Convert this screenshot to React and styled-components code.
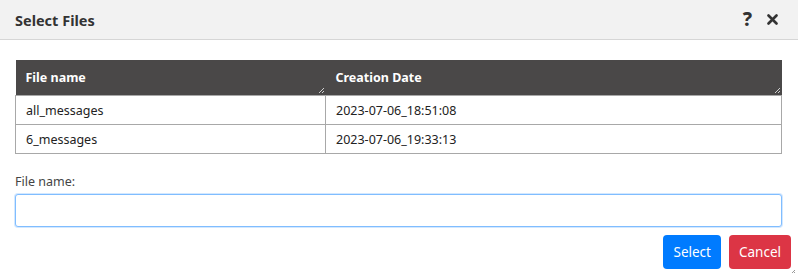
import React from 'react';
import styled, { createGlobalStyle } from 'styled-components';

const GlobalStyle = createGlobalStyle`
  html, body {
    margin: 0;
    padding: 0;
    background: #ffffff;
  }
  body {
    font-family: 'Noto Sans', 'Open Sans', sans-serif;
    color: #333;
  }
`;

const Dialog = styled.div`
  width: 798px;
  height: 276px;
  display: flex;
  flex-direction: column;
  background: #fff;
  position: relative;
`;

const Header = styled.div`
  height: 39px;
  flex-shrink: 0;
  display: flex;
  align-items: center;
  justify-content: space-between;
  padding: 0 20px 0 15px;
  background: #f2f2f2;
  border-bottom: 1px solid #d6d6d6;
`;

const Title = styled.h2`
  margin: 0;
  font-size: 14.5px;
  font-weight: 700;
  color: #333;
`;

const HeaderTools = styled.div`
  display: flex;
  align-items: center;
  gap: 15px;
`;

const ToolButton = styled.button`
  border: 0;
  background: none;
  padding: 0;
  cursor: pointer;
  color: #333;
  display: flex;
  align-items: center;
  font-family: inherit;
  font-weight: 800;
  font-size: ${p => p.$size || 16}px;
  line-height: 1;
`;

const Body = styled.div`
  padding: 20px 15px 0 15px;
  display: flex;
  flex-direction: column;
`;

const Table = styled.table`
  width: 767px;
  border-collapse: collapse;
  font-size: 12.5px;
`;

const HeadCell = styled.th`
  position: relative;
  height: 35px;
  padding: 0 10px;
  text-align: left;
  background: #4a4848;
  color: #fff;
  font-weight: 700;
  width: ${p => p.$width || 'auto'};
`;

const Grip = styled.svg`
  position: absolute;
  right: 1px;
  bottom: 1px;
`;

const Cell = styled.td`
  height: 28px;
  padding: 0 10px;
  border: 1px solid #a8a8a8;
  color: #222;
`;

const Label = styled.label`
  margin-top: 20px;
  font-size: 12.5px;
  color: #444;
  line-height: 16px;
`;

const Input = styled.input`
  margin-top: 4px;
  height: 33px;
  box-sizing: border-box;
  width: 767px;
  border: 1px solid #80bdff;
  border-radius: 3px;
  box-shadow: 0 0 0 1px rgba(128, 189, 255, 0.35);
  outline: none;
  padding: 0 8px;
  font-family: inherit;
  font-size: 13px;
`;

const Actions = styled.div`
  display: flex;
  justify-content: flex-end;
  gap: 8px;
  margin-top: 8px;
  padding-right: 7px;
  margin-right: -15px;
`;

const Button = styled.button`
  height: 34px;
  padding: 0 10px;
  border: 0;
  border-radius: 4px;
  color: #fff;
  font-family: inherit;
  font-size: 13.5px;
  cursor: pointer;
  background: ${p => (p.$variant === 'danger' ? '#dc3545' : '#007bff')};
`;

const Corner = styled.svg`
  position: absolute;
  right: 2px;
  bottom: 2px;
`;

const files = [
  { name: 'all_messages', date: '2023-07-06_18:51:08' },
  { name: '6_messages', date: '2023-07-06_19:33:13' },
];

const ResizeGrip = () => (
  <Grip width="7" height="7" viewBox="0 0 7 7">
    <path d="M6 1L1 6M6 4L4 6" stroke="#d0d0d0" strokeWidth="1" />
  </Grip>
);

export default function App() {
  return (
    <>
      <GlobalStyle />
      <Dialog>
        <Header>
          <Title>Select Files</Title>
          <HeaderTools>
            <ToolButton $size={19} aria-label="help">?</ToolButton>
            <ToolButton aria-label="close">
              <svg width="11" height="11" viewBox="0 0 11 11">
                <path d="M1.5 1.5L9.5 9.5M9.5 1.5L1.5 9.5" stroke="#333" strokeWidth="2.6" strokeLinecap="round" />
              </svg>
            </ToolButton>
          </HeaderTools>
        </Header>
        <Body>
          <Table>
            <thead>
              <tr>
                <HeadCell $width="290px">
                  File name
                  <ResizeGrip />
                </HeadCell>
                <HeadCell>
                  Creation Date
                  <ResizeGrip />
                </HeadCell>
              </tr>
            </thead>
            <tbody>
              {files.map(f => (
                <tr key={f.name}>
                  <Cell>{f.name}</Cell>
                  <Cell>{f.date}</Cell>
                </tr>
              ))}
            </tbody>
          </Table>
          <Label htmlFor="fname">File name:</Label>
          <Input id="fname" type="text" />
          <Actions>
            <Button>Select</Button>
            <Button $variant="danger">Cancel</Button>
          </Actions>
        </Body>
        <Corner width="5" height="5" viewBox="0 0 5 5">
          <path d="M4 1L1 4M4 3L3 4" stroke="#999" strokeWidth="1" />
        </Corner>
      </Dialog>
    </>
  );
}
